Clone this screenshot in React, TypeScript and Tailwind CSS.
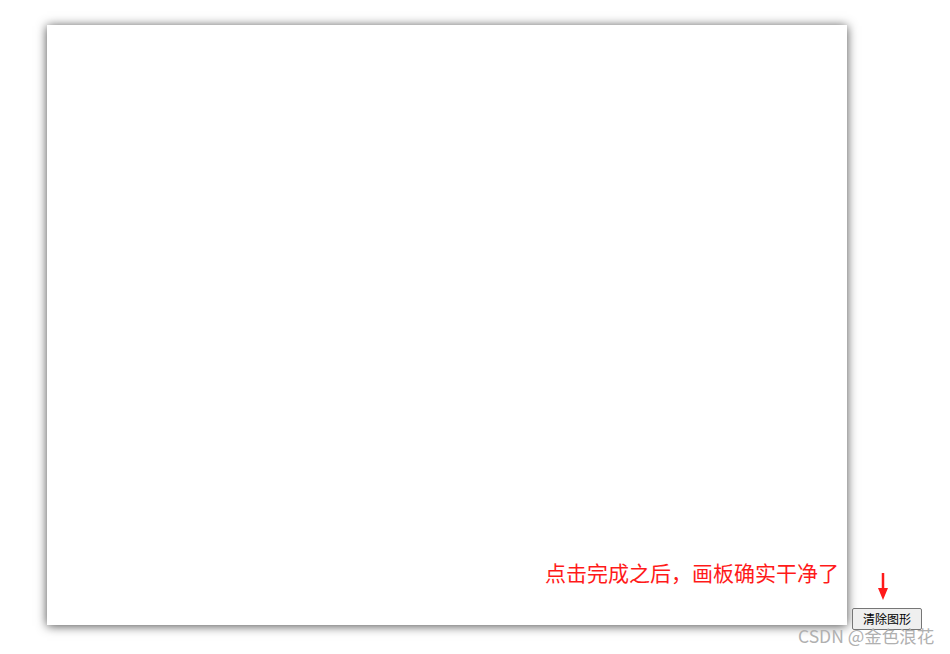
export default function App() {
  return (
    <div className="relative h-[654px] w-[950px] overflow-hidden bg-white font-['Microsoft_YaHei','Noto_Sans_CJK_SC',sans-serif]">
      <div className="flex items-end pl-[47px] pt-[25px]">
        <div className="h-[600px] w-[800px] bg-white shadow-[0_1px_10px_rgba(0,0,0,0.7)]" />
        <button
          type="button"
          className="mb-[-5px] ml-[5px] h-[22px] w-[70px] rounded-[2px] border border-[#767676] bg-[#efefef] text-[12px] leading-none text-black"
        >
          清除图形
        </button>
      </div>

      {/* annotation over the screenshot */}
      <div className="absolute left-[545px] top-[558px] text-[21px] leading-[28px] text-[#ff1a1a]">
        点击完成之后，画板确实干净了
      </div>
      <svg className="absolute left-[877px] top-[572px]" width="12" height="30" viewBox="0 0 12 30">
        <line x1="6" y1="1" x2="6" y2="20" stroke="#ff1a1a" strokeWidth="2.5" />
        <path d="M1 16 L6 28 L11 16 Z" fill="#ff1a1a" />
      </svg>
      <div className="absolute left-[798px] top-[623px] text-[17.5px] leading-[25px] text-[#b0b0b0]">
        CSDN @金色浪花
      </div>
    </div>
  );
}
